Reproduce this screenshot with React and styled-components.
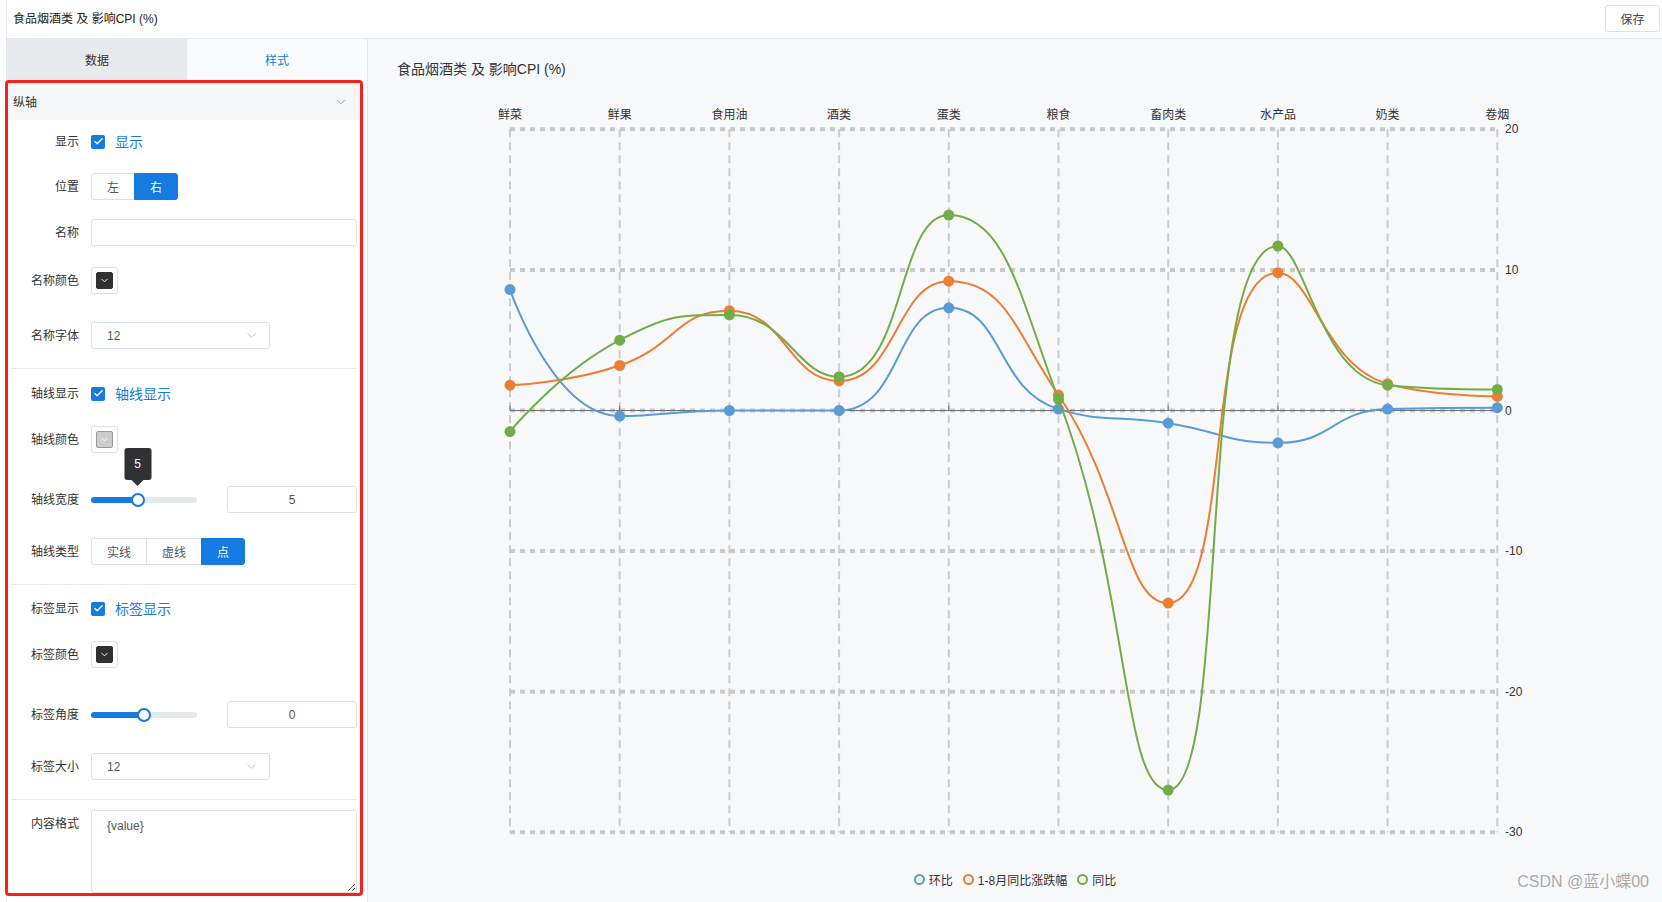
import React from 'react';
import styled, { createGlobalStyle } from 'styled-components';
import { ChevronDown, Check } from 'lucide-react';

const FONT = '"Liberation Sans", "Noto Sans CJK SC", sans-serif';
const BLUE = '#157be0';

const GlobalStyle = createGlobalStyle`
  html, body { margin: 0; padding: 0; background: #fff; }
  body { font-family: ${FONT}; color: #333; }
  * { box-sizing: border-box; }
`;

const Page = styled.div`
  width: 1662px;
  height: 902px;
  padding-left: 6px;
  overflow: hidden;
  background: #fff;
`;

const Frame = styled.div`
  height: 100%;
  display: flex;
  flex-direction: column;
  border-left: 1px solid #e4e7ed;
`;

const TopBar = styled.div`
  height: 39px;
  flex-shrink: 0;
  display: flex;
  align-items: center;
  justify-content: space-between;
  padding: 0 2px 0 6px;
  border-bottom: 1px solid #e4e7ed;
`;

const PageTitle = styled.div`
  font-size: 12px;
  color: #222;
  line-height: 14px;
`;

const SaveButton = styled.button`
  width: 55px;
  height: 27px;
  margin-bottom: 2px;
  border: 1px solid #dcdfe6;
  border-radius: 3px;
  background: #fff;
  font-family: ${FONT};
  font-size: 12px;
  color: #444;
  padding: 0;
`;

const Body = styled.div`
  flex: 1;
  display: flex;
  min-height: 0;
`;

const LeftPanel = styled.div`
  width: 361px;
  flex-shrink: 0;
  border-right: 1px solid #e4e7ed;
  display: flex;
  flex-direction: column;
`;

const Tabs = styled.div`
  display: flex;
  height: 41px;
`;

const Tab = styled.div`
  flex: 1;
  display: flex;
  align-items: center;
  justify-content: center;
  font-size: 12px;
  background: ${(p) => (p.$active ? '#fafbfc' : '#e8e9ed')};
  color: ${(p) => (p.$active ? BLUE : '#333')};
`;

const Highlight = styled.div`
  width: 358px;
  margin-left: -2px;
  border: 3px solid #f5201f;
  border-radius: 4px;
`;

const CollapseHeader = styled.div`
  height: 37px;
  display: flex;
  align-items: center;
  justify-content: space-between;
  padding: 0 12px 0 5px;
  background: #f5f6f8;
  font-size: 12px;
  color: #333;
`;

const Section = styled.div`
  margin: 0 3px;
  padding: ${(p) => p.$pt}px 0 ${(p) => p.$pb}px;
  border-bottom: ${(p) => (p.$last ? 'none' : '1px solid #e4e7ed')};
`;

const Row = styled.div`
  display: flex;
  align-items: ${(p) => (p.$top ? 'flex-start' : 'center')};
  min-height: 27px;
  margin-top: ${(p) => p.$mt || 0}px;
`;

const Label = styled.div`
  width: 68px;
  flex-shrink: 0;
  margin-right: 12px;
  text-align: right;
  font-size: 12px;
  line-height: 14px;
  color: #333;
  padding-top: ${(p) => (p.$top ? 7 : 0)}px;
`;

const CheckWrap = styled.label`
  display: flex;
  align-items: center;
  gap: 10px;
  font-size: 14px;
  line-height: 16px;
  color: ${BLUE};
`;

const CheckBox = styled.span`
  width: 14px;
  height: 14px;
  border-radius: 2px;
  background: ${BLUE};
  display: flex;
  align-items: center;
  justify-content: center;
`;

const Segmented = styled.div`
  display: flex;
  height: 27px;
`;

const Segment = styled.div`
  padding: 0 15px;
  display: flex;
  align-items: center;
  font-size: 12px;
  border: 1px solid ${(p) => (p.$active ? BLUE : '#dcdfe6')};
  margin-left: -1px;
  background: ${(p) => (p.$active ? BLUE : '#fff')};
  color: ${(p) => (p.$active ? '#fff' : '#555')};
  &:first-child { margin-left: 0; border-radius: 3px 0 0 3px; }
  &:last-child { border-radius: 0 3px 3px 0; }
`;

const TextInput = styled.input`
  flex: 1;
  height: 27px;
  min-width: 0;
  border: 1px solid #dcdfe6;
  border-radius: 3px;
  background: #fff;
  font-family: ${FONT};
  font-size: 12px;
  color: #555;
  text-align: ${(p) => (p.$center ? 'center' : 'left')};
  padding: 0 15px;
  outline: none;
`;

const ColorBox = styled.div`
  width: 27px;
  height: 27px;
  border: 1px solid #dcdfe6;
  border-radius: 3px;
  padding: 4px;
  background: #fff;
`;

const Swatch = styled.div`
  width: 100%;
  height: 100%;
  border: 1px solid ${(p) => p.$edge};
  border-radius: 2px;
  background: ${(p) => p.$color};
  display: flex;
  align-items: center;
  justify-content: center;
`;

const Select = styled.div`
  width: 179px;
  height: 27px;
  border: 1px solid #dcdfe6;
  border-radius: 3px;
  background: #fff;
  display: flex;
  align-items: center;
  justify-content: space-between;
  padding: 0 10px 0 15px;
  font-size: 12px;
  color: #555;
`;

const SliderWrap = styled.div`
  width: 106px;
  height: 27px;
  margin-right: 30px;
  display: flex;
  align-items: center;
  position: relative;
`;

const Track = styled.div`
  width: 100%;
  height: 6px;
  border-radius: 3px;
  background: #e4e7ed;
  position: relative;
`;

const Fill = styled.div`
  height: 100%;
  border-radius: 3px;
  background: ${BLUE};
`;

const Thumb = styled.div`
  position: absolute;
  top: 50%;
  width: 14px;
  height: 14px;
  border-radius: 50%;
  border: 2px solid ${BLUE};
  background: #fff;
  transform: translate(-50%, -50%);
`;

const Tip = styled.div`
  position: absolute;
  left: 50%;
  bottom: calc(100% + 15px);
  transform: translateX(-50%);
  width: 27px;
  height: 32px;
  border-radius: 3px;
  background: #303133;
  color: #fff;
  font-size: 12px;
  display: flex;
  align-items: center;
  justify-content: center;
  &::after {
    content: '';
    position: absolute;
    top: 100%;
    left: 50%;
    margin-left: -6px;
    border: 6px solid transparent;
    border-top-color: #303133;
    border-bottom: 0;
  }
`;

const TextArea = styled.textarea`
  flex: 1;
  height: 83px;
  border: 1px solid #dcdfe6;
  border-radius: 3px;
  font-family: ${FONT};
  font-size: 12px;
  color: #555;
  padding: 8px 15px;
  resize: vertical;
  outline: none;
`;

const ChartPanel = styled.div`
  flex: 1;
  background: #f7f8fa;
  display: flex;
  flex-direction: column;
  position: relative;
`;

const ChartTitle = styled.div`
  padding: 20px 0 0 29px;
  height: 40px;
  font-size: 14px;
  line-height: 20px;
  color: #333;
`;

const ChartSvg = styled.svg`
  display: block;
  font-family: ${FONT};
`;

const Legend = styled.div`
  flex: 1;
  display: flex;
  align-items: center;
  justify-content: center;
  gap: 10px;
  padding-bottom: 2px;
`;

const LegendItem = styled.div`
  display: flex;
  align-items: center;
  gap: 4px;
  font-size: 12px;
  color: #333;
`;

const LegendIcon = styled.span`
  width: 11px;
  height: 11px;
  border-radius: 50%;
  border: 2px solid ${(p) => p.$color};
`;

const Watermark = styled.div`
  position: absolute;
  right: 13px;
  bottom: 10px;
  font-size: 16px;
  color: #a9a9a9;
  text-shadow: 0 0 2px #fff;
`;

const cats = ['鲜菜', '鲜果', '食用油', '酒类', '蛋类', '粮食', '畜肉类', '水产品', '奶类', '卷烟'];
const series = [
  { name: '环比', color: '#5b9bd5', data: [8.6, -0.4, 0, 0, 7.3, 0.1, -0.9, -2.3, 0.1, 0.2] },
  { name: '1-8月同比涨跌幅', color: '#ed7d31', data: [1.8, 3.2, 7.1, 2.1, 9.2, 1.1, -13.7, 9.8, 1.9, 1.0] },
  { name: '同比', color: '#70ad47', data: [-1.5, 5.0, 6.8, 2.4, 13.9, 0.8, -27.0, 11.7, 1.8, 1.5] },
];
const ticks = [20, 10, 0, -10, -20, -30];

const X0 = 510;
const STEP = 109.7;
const xAt = (i) => X0 + i * STEP;
const yAt = (v) => 410.5 - v * 14.06;
const XEND = xAt(cats.length - 1);

const clamp = (v, a, b) => Math.max(Math.min(v, Math.max(a, b)), Math.min(a, b));

// smoothing with clamped control points, so a peak stays on its point
function smoothPath(pts, smooth = 0.5) {
  const n = pts.length;
  let d = `M${pts[0][0]},${pts[0][1]}`;
  let cp0 = pts[0];
  for (let i = 1; i < n; i++) {
    const [x, y] = pts[i];
    if (i === n - 1) {
      d += ` C${cp0[0]},${cp0[1]} ${x},${y} ${x},${y}`;
      break;
    }
    const [px, py] = pts[i - 1];
    const [nx, ny] = pts[i + 1];
    let vx = nx - px;
    let vy = ny - py;
    const l0 = Math.hypot(x - px, y - py);
    const l1 = Math.hypot(nx - x, ny - y);
    const r = l1 / (l0 + l1);
    let ncx = clamp(x + vx * smooth * r, nx, x);
    let ncy = clamp(y + vy * smooth * r, ny, y);
    vx = ncx - x;
    vy = ncy - y;
    let c1x = clamp(x - (vx * l0) / l1, px, x);
    let c1y = clamp(y - (vy * l0) / l1, py, y);
    vx = x - c1x;
    vy = y - c1y;
    ncx = x + (vx * l1) / l0;
    ncy = y + (vy * l1) / l0;
    d += ` C${cp0[0]},${cp0[1]} ${c1x},${c1y} ${x},${y}`;
    cp0 = [ncx, ncy];
  }
  return d;
}

const Chart = () => (
  <ChartSvg width="1294" height="780" viewBox="368 79 1294 780">
    {cats.map((c, i) => (
      <line key={'v' + c} x1={xAt(i)} x2={xAt(i)} y1={yAt(20)} y2={yAt(-30)}
        stroke="#cccccc" strokeWidth="2" strokeDasharray="8 5" />
    ))}
    {ticks.map((t) => (
      <line key={'h' + t} x1={X0} x2={XEND} y1={yAt(t)} y2={yAt(t)}
        stroke="#c8c8c8" strokeWidth="4" strokeDasharray="5 5" />
    ))}
    <line x1={X0} x2={XEND} y1={yAt(0)} y2={yAt(0)} stroke="#6e7079" strokeWidth="1" />
    {cats.map((c, i) => (
      <line key={'t' + c} x1={xAt(i)} x2={xAt(i)} y1={yAt(0) - 5} y2={yAt(0)} stroke="#6e7079" strokeWidth="1" />
    ))}
    {cats.map((c, i) => (
      <text key={'l' + c} x={xAt(i)} y={119} textAnchor="middle" fontSize="12" fill="#333">{c}</text>
    ))}
    {ticks.map((t) => (
      <text key={'y' + t} x={1505} y={yAt(t) + 4} fontSize="12" fill="#333">{t}</text>
    ))}
    {series.map((s) => {
      const pts = s.data.map((v, i) => [xAt(i), yAt(v)]);
      return (
        <g key={s.name}>
          <path d={smoothPath(pts)} fill="none" stroke={s.color} strokeWidth="2" />
          {pts.map(([x, y], i) => (
            <circle key={i} cx={x} cy={y} r="5.5" fill={s.color} />
          ))}
        </g>
      );
    })}
  </ChartSvg>
);

const CheckField = ({ text }) => (
  <CheckWrap>
    <CheckBox><Check size={11} color="#fff" strokeWidth={3} /></CheckBox>
    {text}
  </CheckWrap>
);

const ColorField = ({ color, edge }) => (
  <ColorBox>
    <Swatch $color={color} $edge={edge}>
      <ChevronDown size={11} color="#fff" strokeWidth={2} />
    </Swatch>
  </ColorBox>
);

const SelectField = ({ value }) => (
  <Select>
    {value}
    <ChevronDown size={15} color="#c0c4cc" strokeWidth={1.5} />
  </Select>
);

const SliderField = ({ pct, value, tip }) => (
  <>
    <SliderWrap>
      <Track>
        <Fill style={{ width: `${pct}%` }} />
        <Thumb style={{ left: `${pct}%` }}>{tip && <Tip>{value}</Tip>}</Thumb>
      </Track>
    </SliderWrap>
    <TextInput $center defaultValue={value} />
  </>
);

export default function App() {
  return (
    <Page>
      <GlobalStyle />
      <Frame>
        <TopBar>
          <PageTitle>食品烟酒类 及 影响CPI (%)</PageTitle>
          <SaveButton>保存</SaveButton>
        </TopBar>
        <Body>
          <LeftPanel>
            <Tabs>
              <Tab>数据</Tab>
              <Tab $active>样式</Tab>
            </Tabs>
            <Highlight>
              <CollapseHeader>
                纵轴
                <ChevronDown size={14} color="#909399" strokeWidth={1.5} />
              </CollapseHeader>
              <Section $pt={8} $pb={19}>
                <Row><Label>显示</Label><CheckField text="显示" /></Row>
                <Row $mt={18}>
                  <Label>位置</Label>
                  <Segmented><Segment>左</Segment><Segment $active>右</Segment></Segmented>
                </Row>
                <Row $mt={19}><Label>名称</Label><TextInput /></Row>
                <Row $mt={21}><Label>名称颜色</Label><ColorField color="#303030" edge="#303030" /></Row>
                <Row $mt={28}><Label>名称字体</Label><SelectField value="12" /></Row>
              </Section>
              <Section $pt={11} $pb={19}>
                <Row><Label>轴线显示</Label><CheckField text="轴线显示" /></Row>
                <Row $mt={19}><Label>轴线颜色</Label><ColorField color="#cccccc" edge="#999999" /></Row>
                <Row $mt={33}><Label>轴线宽度</Label><SliderField pct={44} value="5" tip /></Row>
                <Row $mt={25}>
                  <Label>轴线类型</Label>
                  <Segmented>
                    <Segment>实线</Segment>
                    <Segment>虚线</Segment>
                    <Segment $active>点</Segment>
                  </Segmented>
                </Row>
              </Section>
              <Section $pt={10} $pb={19}>
                <Row><Label>标签显示</Label><CheckField text="标签显示" /></Row>
                <Row $mt={19}><Label>标签颜色</Label><ColorField color="#303030" edge="#303030" /></Row>
                <Row $mt={33}><Label>标签角度</Label><SliderField pct={50} value="0" /></Row>
                <Row $mt={25}><Label>标签大小</Label><SelectField value="12" /></Row>
              </Section>
              <Section $pt={10} $pb={0} $last>
                <Row $top>
                  <Label $top>内容格式</Label>
                  <TextArea defaultValue="{value}" />
                </Row>
              </Section>
            </Highlight>
          </LeftPanel>
          <ChartPanel>
            <ChartTitle>食品烟酒类 及 影响CPI (%)</ChartTitle>
            <Chart />
            <Legend>
              {series.map((s) => (
                <LegendItem key={s.name}>
                  <LegendIcon $color={s.color} />
                  {s.name}
                </LegendItem>
              ))}
            </Legend>
            <Watermark>CSDN @蓝小蝶00</Watermark>
          </ChartPanel>
        </Body>
      </Frame>
    </Page>
  );
}
